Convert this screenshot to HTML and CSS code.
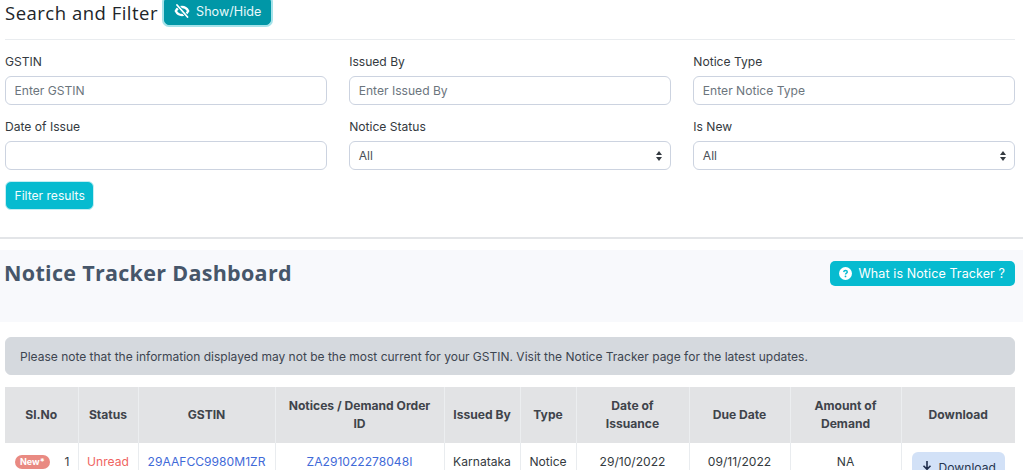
FILE: index.html
```html
<!DOCTYPE html>
<html lang="en">
<head>
<meta charset="utf-8">
<title>Notice Tracker</title>
<link rel="stylesheet" href="styles.css">
</head>
<body>
<section class="filter">
  <div class="filter-head">
    <h2>Search and Filter</h2>
    <button class="btn-toggle">
      <svg width="16" height="14" viewBox="0 0 16 14" fill="none" stroke="#fff" stroke-width="2.3" stroke-linecap="round"><path d="M1.8 7C3.2 4.3 5.4 3 8 3S12.8 4.3 14.2 7C12.800 9.700 10.600 11 8 11S3.200 9.700 1.800 7Z"/><circle cx="8" cy="7" r="1.4" fill="#fff" stroke="none"/><path d="M3 1l10.500 12" stroke="#0097a7" stroke-width="3.400"/><path d="M3 1l10.500 12" stroke-width="1.800"/></svg>
      Show/Hide
    </button>
  </div>
  <div class="form-grid">
    <div class="field"><label>GSTIN</label><input class="control" placeholder="Enter GSTIN"></div>
    <div class="field"><label>Issued By</label><input class="control" placeholder="Enter Issued By"></div>
    <div class="field"><label>Notice Type</label><input class="control" placeholder="Enter Notice Type"></div>
    <div class="field"><label>Date of Issue</label><input class="control"></div>
    <div class="field"><label>Notice Status</label><div class="control select">All<svg class="caret" width="6" height="10" viewBox="0 0 6 10"><path d="M3 0l3 4H0zM3 10L0 6h6z" fill="#343a40"/></svg></div></div>
    <div class="field"><label>Is New</label><div class="control select">All<svg class="caret" width="6" height="10" viewBox="0 0 6 10"><path d="M3 0l3 4H0zM3 10L0 6h6z" fill="#343a40"/></svg></div></div>
  </div>
  <button class="btn-filter">Filter results</button>
</section>
<hr class="divider">
<section class="dash">
  <h1>Notice Tracker Dashboard</h1>
  <button class="btn-what">
    <svg width="13" height="13" viewBox="0 0 13 13"><circle cx="6.5" cy="6.5" r="6.5" fill="#fff"/><path d="M4.7 5.1C4.8 4 5.5 3.5 6.5 3.5S8.3 4.1 8.3 5C8.3 6.2 6.5 6.2 6.5 7.5" fill="none" stroke="#06bbd0" stroke-width="1.4"/><circle cx="6.5" cy="9.4" r=".9" fill="#06bbd0"/></svg>
    What is Notice Tracker ?
  </button>
</section>
<div class="note">Please note that the information displayed may not be the most current for your GSTIN. Visit the Notice Tracker page for the latest updates.</div>
<table>
  <colgroup>
    <col class="c1"><col class="c2"><col class="c3"><col class="c4"><col class="c5"><col class="c6"><col class="c7"><col class="c8"><col class="c9"><col class="c10">
  </colgroup>
  <thead>
    <tr>
      <th>Sl.No</th><th>Status</th><th>GSTIN</th><th>Notices / Demand Order ID</th><th>Issued By</th><th>Type</th><th>Date of Issuance</th><th>Due Date</th><th>Amount of Demand</th><th>Download</th>
    </tr>
  </thead>
  <tbody>
    <tr>
      <td><div class="slno"><span class="badge">New*</span><span>1</span></div></td>
      <td class="unread">Unread</td>
      <td class="link">29AAFCC9980M1ZR</td>
      <td class="link">ZA291022278048I</td>
      <td>Karnataka</td>
      <td>Notice</td>
      <td>29/10/2022</td>
      <td>09/11/2022</td>
      <td>NA</td>
      <td><button class="btn-dl"><svg width="12" height="12" viewBox="0 0 12 12" fill="none" stroke="#1f2d4d" stroke-width="1.6"><path d="M6 0v8M2.5 4.8L6 8.3l3.5-3.5M1 11h10"/></svg>Download</button></td>
    </tr>
  </tbody>
</table>
</body>
</html>
```
FILE: styles.css
```css
* { box-sizing: border-box; }
html, body { height: 470px; overflow: hidden; }
body { margin: 0; padding: 0 8px 0 5px; background: #fff; font-family: Inter, "Liberation Sans", sans-serif; font-size: 12px; color: #343a40; }
button { font-family: inherit; cursor: pointer; }

.filter-head { display: flex; align-items: center; gap: 6px; height: 40px; padding-bottom: 14px; border-bottom: 1px solid #e9ecef; }
.filter-head h2 { margin: 0; font-family: "Open Sans", sans-serif; font-size: 18.5px; font-weight: 400; letter-spacing: .5px; color: #212529; }
.btn-toggle { display: flex; align-items: center; gap: 6px; height: 28px; margin-top: -3px; padding: 0 9px 0 9px; border: 1px solid #0097a7; border-radius: 5px; background: #0097a7; box-shadow: 0 0 0 2px #a5e3ea; color: #e8f8fa; font-size: 12.6px; }

.form-grid { display: grid; grid-template-columns: repeat(3, 1fr); column-gap: 22.5px; row-gap: 14px; margin-top: 14px; }
.field { display: flex; flex-direction: column; }
.field label { height: 15px; line-height: 15px; margin-bottom: 7px; font-size: 12.1px; color: #343a40; }
.control { display: flex; align-items: center; height: 29px; width: 100%; padding: 0 9px 0 8.5px; border: 1px solid #ccd3e0; border-top-width: 1.5px; border-radius: 6px; background: #fff; font: inherit; font-size: 12.1px; color: #495057; outline: none; }
.control::placeholder { color: #6c757d; opacity: 1; }
.select { justify-content: space-between; }
.caret { margin-right: -1px; }

.btn-filter { display: block; height: 29px; margin-top: 11px; padding: 0 8.5px; border: 1px solid #c4eef3; border-radius: 6px; background: #06bbd0; color: #f4fdfe; font-size: 12.1px; }

.divider { height: 2px; margin: 27px -8px 11px -5px; border: 0; background: #e3e5e8; }

.dash { display: flex; justify-content: space-between; align-items: flex-start; height: 72px; margin: 0 -8px 15px -5px; padding: 10px 8px 0 4px; background: #f8f9fc; }
.dash h1 { margin: 0; font-family: "Open Sans", sans-serif; font-size: 21.5px; font-weight: 700; line-height: 25px; color: #46566a; letter-spacing: .3px; }
.btn-what { display: flex; align-items: center; gap: 6px; height: 25px; margin-top: 1px; padding: 0 10px 0 9px; border: 0; border-radius: 5px; background: #06bbd0; color: #fff; font-size: 12.5px; letter-spacing: .1px; }

.note { height: 38px; padding: 0 14px; line-height: 37px; border: 1px solid #d5d9de; border-radius: 6px; background: #d5d9de; font-size: 12px; color: #3d4550; }

table { width: 1010px; margin-top: 12px; border-collapse: collapse; table-layout: fixed; font-size: 12.1px; }
.c1 { width: 73px; } .c2 { width: 60px; } .c3 { width: 137px; } .c4 { width: 169px; } .c5 { width: 76px; } .c6 { width: 56px; } .c7 { width: 113px; } .c8 { width: 101px; } .c9 { width: 111px; } .c10 { width: 114px; }
th { height: 56px; padding: 0 8px; background: #e2e3e5; border-right: 1px solid #eceef0; font-weight: 700; line-height: 18px; font-size: 12.1px; color: #3f444b; text-align: center; }
th:last-child, td:last-child { border-right: 0; }
td { height: 36px; padding: 0 8px; border-right: 1px solid #e9ecef; text-align: center; color: #343a40; white-space: nowrap; }
.slno { display: flex; justify-content: space-between; align-items: center; padding-left: 2px; }
.badge { display: inline-block; padding: 0 5px; height: 14px; margin-top: 1px; line-height: 14px; border-radius: 8px; background: #e98a82; color: #fff; font-size: 9px; font-weight: 700; }
.unread { color: #f0645f; }
.link { color: #3f6ad8; }
.btn-dl { display: inline-flex; align-items: center; gap: 6px; height: 30px; margin: 6px 0 -6px; padding: 0 9px; border: 0; border-radius: 6px; background: #d2e1f7; color: #27364f; font-size: 12.1px; }
```
